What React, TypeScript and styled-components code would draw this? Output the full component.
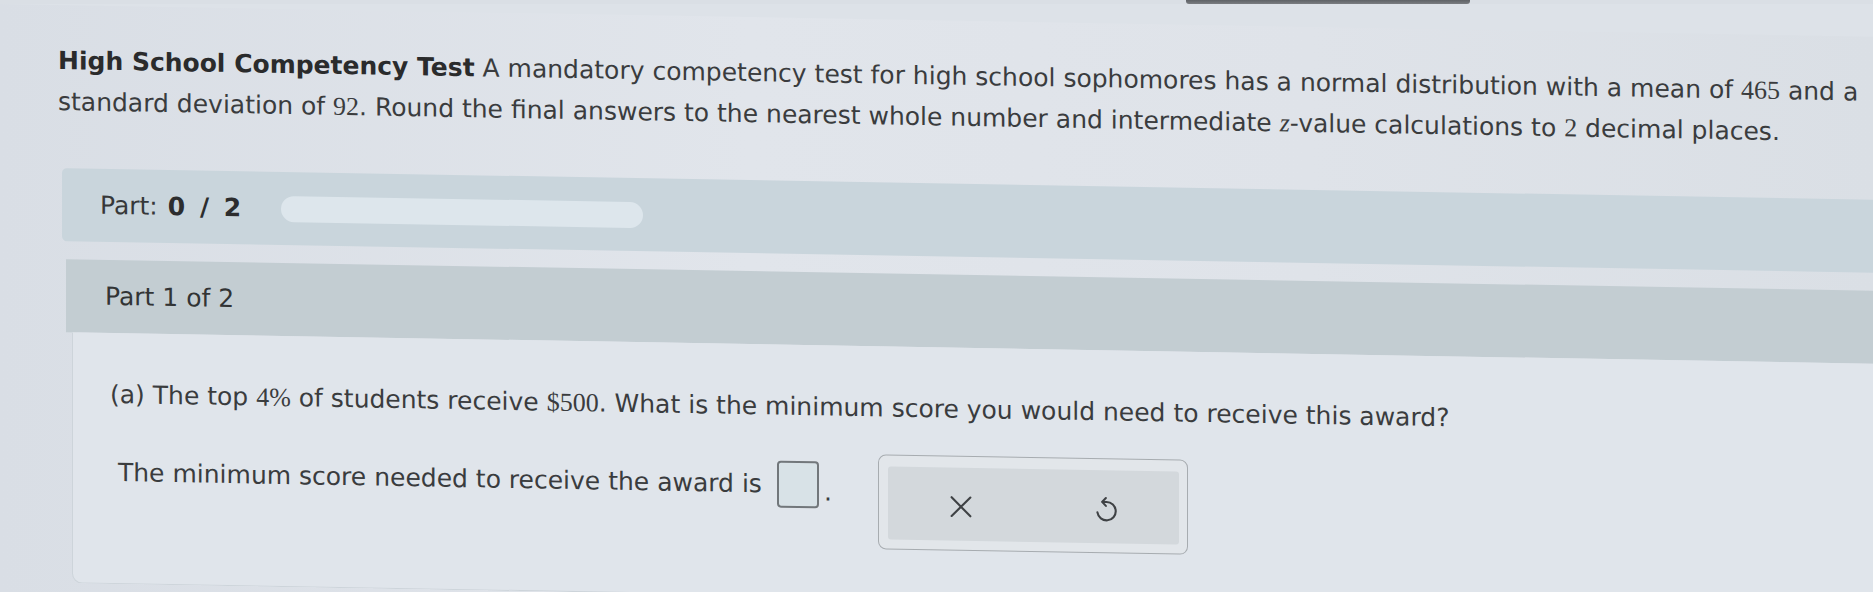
import styled, { createGlobalStyle } from "styled-components";

const GlobalStyle = createGlobalStyle`
  html, body {
    margin: 0;
    padding: 0;
  }
  body {
    width: 1873px;
    height: 592px;
    overflow: hidden;
    background: #dde2e8;
    font-family: "DejaVu Sans", Verdana, sans-serif;
    color: #363839;
  }
`;

const Frame = styled.div`
  width: 1873px;
  height: 592px;
  overflow: hidden;
`;

const TopStrip = styled.div`
  height: 4px;
  display: flex;
  background: #dadfe5;
`;

const TopTab = styled.div`
  margin-left: 1186px;
  width: 284px;
  background: linear-gradient(180deg, #5f6266, #7a7d81);
  border-radius: 0 0 3px 3px;
`;

// the reference is a photo of a monitor, so the whole page leans a little
const Page = styled.div`
  width: 1873px;
  height: 588px;
  display: flex;
  flex-direction: column;
  background: linear-gradient(90deg, #d9dee5 0%, #e1e5eb 40%, #dfe3e9 70%, #dadfe5 100%);
  transform: skewY(1deg);
  transform-origin: 0 0;
`;

const Intro = styled.p`
  margin: 35px 0 0 58px;
  font-size: 25px;
  line-height: 41px;
  white-space: nowrap;
  color: #3a3c3e;
`;

const Title = styled.strong`
  font-weight: 700;
  color: #2a2b2c;
`;

const Num = styled.span`
  font-family: "Liberation Serif", "Times New Roman", serif;
  font-size: 26px;
  line-height: 1;
`;

const Var = styled.i`
  font-family: "Liberation Serif", "Times New Roman", serif;
  font-size: 26px;
  line-height: 1;
`;

const ProgressBar = styled.div`
  margin: 46px 0 0 62px;
  height: 73px;
  display: flex;
  align-items: center;
  padding-left: 38px;
  background: #c9d5dc;
  border-radius: 5px 0 0 5px;
  font-size: 25px;
`;

const PartCount = styled.b`
  margin-left: 10px;
  font-weight: 700;
  color: #2c2d2e;
  word-spacing: 6px;
`;

const Track = styled.div`
  margin-left: 40px;
  width: 362px;
  height: 26px;
  border-radius: 13px;
  background: #dde6ec;
`;

const Section = styled.section`
  margin: 18px 0 0 66px;
  display: flex;
  flex-direction: column;
`;

const SectionHeader = styled.div`
  height: 73px;
  display: flex;
  align-items: center;
  padding-left: 39px;
  background: #c3cdd2;
  font-size: 25px;
  color: #323435;
`;

const SectionBody = styled.div`
  margin-left: 6px;
  height: 251px;
  box-sizing: border-box;
  padding: 46px 0 0 37px;
  background: #e0e5eb;
  border: 1px solid #cdd4da;
  border-top: none;
  border-right: none;
  border-radius: 0 0 0 10px;
`;

const Question = styled.div`
  font-size: 25px;
  line-height: 32px;
  white-space: nowrap;
  color: #3a3c3e;
`;

const AnswerRow = styled.div`
  margin-top: 30px;
  display: flex;
  align-items: flex-start;
`;

const Sentence = styled.div`
  margin: 8px 0 0 8px;
  display: flex;
  align-items: center;
  font-size: 25px;
  white-space: nowrap;
  color: #3a3c3e;
`;

const AnswerBox = styled.div`
  margin-left: 15px;
  width: 42px;
  height: 47px;
  box-sizing: border-box;
  border: 2px solid #72777b;
  border-radius: 4px;
  background: #d8e2e7;
`;

const Period = styled.span`
  margin: 14px 0 0 5px;
`;

const ButtonGroup = styled.div`
  margin-left: 46px;
  width: 310px;
  height: 95px;
  box-sizing: border-box;
  padding: 11px 8px 9px 9px;
  border: 1px solid #a7acb0;
  border-radius: 8px;
  background: #e2e6ea;
  display: flex;
`;

const ButtonPanel = styled.div`
  flex: 1;
  display: flex;
  background: #d3d8dc;
  border-radius: 3px;
`;

const IconButton = styled.button`
  flex: 1;
  display: flex;
  align-items: center;
  justify-content: center;
  padding: 4px 0 0;
  border: none;
  background: transparent;
  color: #3f4245;
  cursor: pointer;
`;

const ClearIcon = () => (
  <svg width="30" height="30" viewBox="0 0 24 24" fill="none" stroke="currentColor" strokeWidth="1.7" strokeLinecap="round">
    <path d="M4.5 4.5l15 15M19.5 4.5l-15 15" />
  </svg>
);

const ResetIcon = () => (
  <svg width="27" height="32" viewBox="0 0 22 26" fill="none" stroke="currentColor" strokeWidth="1.7" strokeLinecap="round" strokeLinejoin="round">
    <path d="M8 7h3a7.5 7.5 0 1 1-7.4 8.6" />
    <path d="M10.5 3.8 7.4 7l3.1 3.2" />
  </svg>
);

export default function App() {
  return (
    <Frame>
      <GlobalStyle />
      <TopStrip>
        <TopTab />
      </TopStrip>
      <Page>
        <Intro>
          <Title>High School Competency Test</Title> A mandatory competency test for high school sophomores has a normal
          distribution with a mean of <Num>465</Num> and a
          <br />
          standard deviation of <Num>92</Num>. Round the final answers to the nearest whole number and intermediate{" "}
          <Var>z</Var>-value calculations to <Num>2</Num> decimal places.
        </Intro>
        <ProgressBar>
          Part:<PartCount>0 / 2</PartCount>
          <Track />
        </ProgressBar>
        <Section>
          <SectionHeader>Part 1 of 2</SectionHeader>
          <SectionBody>
            <Question>
              (a) The top <Num>4%</Num> of students receive <Num>$500</Num>. What is the minimum score you would need
              to receive this award?
            </Question>
            <AnswerRow>
              <Sentence>
                The minimum score needed to receive the award is
                <AnswerBox />
                <Period>.</Period>
              </Sentence>
              <ButtonGroup>
                <ButtonPanel>
                  <IconButton aria-label="Clear">
                    <ClearIcon />
                  </IconButton>
                  <IconButton aria-label="Reset">
                    <ResetIcon />
                  </IconButton>
                </ButtonPanel>
              </ButtonGroup>
            </AnswerRow>
          </SectionBody>
        </Section>
      </Page>
    </Frame>
  );
}
